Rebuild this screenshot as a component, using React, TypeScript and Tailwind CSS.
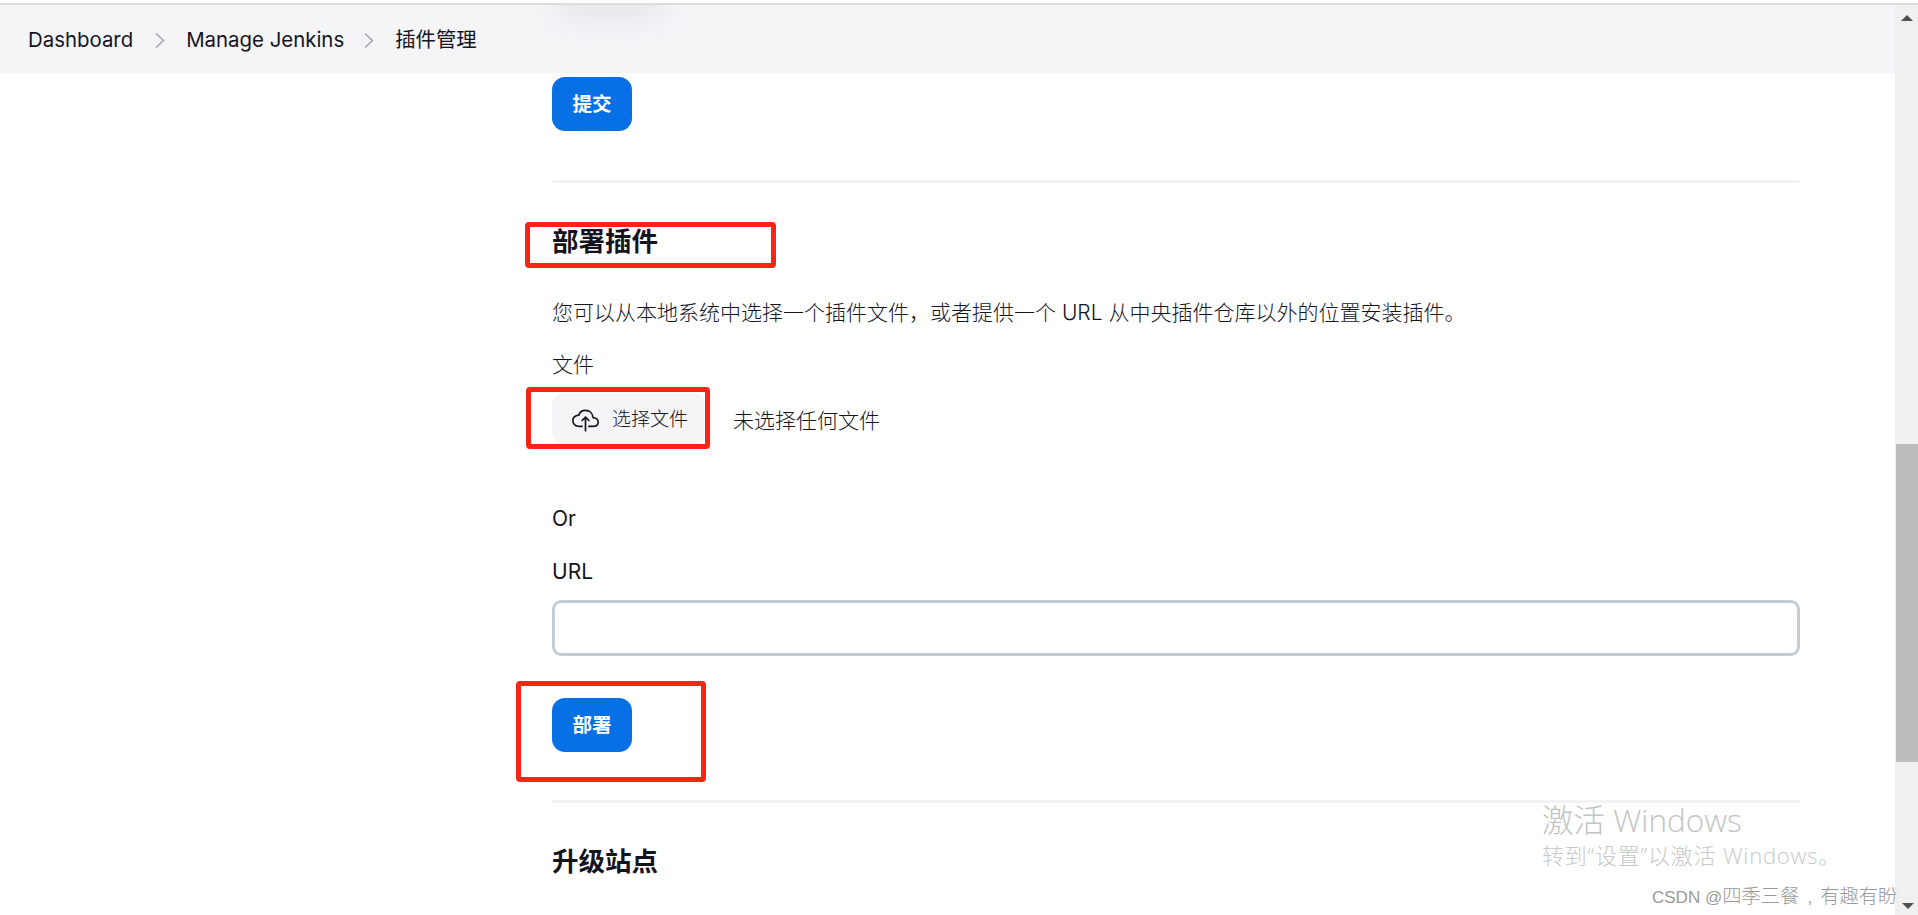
import React from "react";
import { IoCloudUploadOutline } from "react-icons/io5";

function Chevron() {
  return (
    <svg width="12" height="17" viewBox="0 0 12 17" fill="none" className="shrink-0">
      <path d="M2 1.5 L9.5 8.5 L2 15.5" stroke="#a3a3b2" strokeWidth="1.5" />
    </svg>
  );
}

function RedBox({ className }: { className: string }) {
  return <div className={"absolute border-[5px] border-[#fb2314] rounded-[4px] " + className} />;
}

export default function App() {
  return (
    <div className="relative w-[1918px] h-[915px] overflow-hidden bg-white pt-[3px] font-['Inter','Noto_Sans_CJK_SC',sans-serif] text-[#14141f]">
      <div className="h-[2px] bg-[#dcdcdc]" />
      <div className="flex h-[910px]">
        <main className="flex-1 min-w-0">
          <header className="relative h-[68px] bg-[#f5f5f8] flex items-center pl-[28px] pt-[3px] text-[20.4px] overflow-hidden">
            <div className="absolute left-[555px] top-[-22px] w-[110px] h-[36px] rounded-full bg-[#e6e6ea] blur-[14px]" />
            <span className="relative">Dashboard</span>
            <span className="ml-[21px] mr-[20px]"><Chevron /></span>
            <span className="relative">Manage Jenkins</span>
            <span className="ml-[19px] mr-[20px]"><Chevron /></span>
            <span className="relative">插件管理</span>
          </header>
          <div className="pl-[552px] pr-[95px]">
            <button className="mt-[4px] block w-[80px] h-[54px] pt-[2px] rounded-[13px] bg-[#0870e5] text-white font-bold text-[19.6px]">提交</button>
            <div className="mt-[49px] h-[3px] bg-[#f3f3f7]" />
            <h2 className="mt-[42px] font-bold text-[26.5px] leading-[32px]">部署插件</h2>
            <p className="mt-[42px] text-[21px] font-light leading-[28px]">您可以从本地系统中选择一个插件文件，或者提供一个 URL 从中央插件仓库以外的位置安装插件。</p>
            <div className="mt-[24px] text-[21px] font-light leading-[28px]">文件</div>
            <div className="mt-[14px] flex items-center h-[52px]">
              <button className="flex items-center w-[155px] h-[52px] pt-[3px] rounded-[13px] bg-[#f5f5f8] pl-[20px] text-[19px] font-light">
                <IoCloudUploadOutline size={27} className="shrink-0" />
                <span className="ml-[13px]">选择文件</span>
              </button>
              <span className="ml-[26px] pt-[4px] text-[21px] font-light">未选择任何文件</span>
            </div>
            <div className="mt-[60px] text-[21px] leading-[28px]">Or</div>
            <div className="mt-[25px] text-[21px] leading-[28px]">URL</div>
            <input className="mt-[14px] block w-full h-[56px] border-[3px] border-[#c3cdd3] rounded-[9px] bg-white" />
            <button className="mt-[42px] block w-[80px] h-[54px] pt-[2px] rounded-[13px] bg-[#0870e5] text-white font-bold text-[19.6px]">部署</button>
            <div className="mt-[48px] h-[3px] bg-[#f3f3f7]" />
            <h2 className="mt-[42px] font-bold text-[26.5px] leading-[32px]">升级站点</h2>
          </div>
        </main>
        <aside className="w-[23px] bg-[#f0f0f0] flex flex-col items-end">
          <div className="w-[22px] h-[439px] flex justify-center pt-[10px]">
            <div className="w-0 h-0 border-x-[6px] border-x-transparent border-b-[6px] border-b-[#505050]" />
          </div>
          <div className="w-[22px] h-[318px] bg-[#bcbcbc]" />
        </aside>
      </div>

      <RedBox className="left-[525px] top-[222px] w-[251px] h-[46px]" />
      <RedBox className="left-[526px] top-[387px] w-[184px] h-[62px]" />
      <RedBox className="left-[516px] top-[681px] w-[190px] h-[101px]" />

      <div className="absolute left-[1542px] top-[800px] text-[31.5px] leading-[40px] text-[#c4c4c4] font-['Open_Sans','Noto_Sans_CJK_SC',sans-serif] font-light whitespace-nowrap">激活 Windows</div>
      <div className="absolute left-[1542px] top-[841px] text-[22px] tracking-[0.8px] leading-[28px] text-[#c8c8c8] font-['Open_Sans','Noto_Sans_CJK_SC',sans-serif] font-light whitespace-nowrap">转到“设置”以激活 Windows。</div>
      <div className="absolute left-[1652px] top-[884px] text-[17px] leading-[26px] text-[#9a9a9a] font-['Liberation_Sans','Noto_Sans_CJK_SC',sans-serif] font-light whitespace-nowrap">
        CSDN @<span className="text-[19.3px]">四季三餐</span><span className="inline-block w-[21px] text-center">,</span><span className="text-[19.3px]">有趣有盼</span>
      </div>
      <div className="absolute left-[1902px] top-[903px] w-0 h-0 border-x-[6px] border-x-transparent border-t-[6px] border-t-[#505050]" />
    </div>
  );
}
